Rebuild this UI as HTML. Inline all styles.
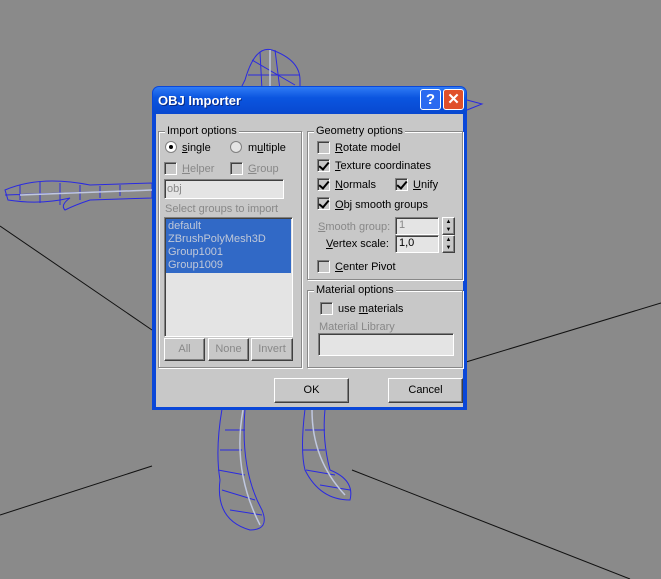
<!DOCTYPE html>
<html><head><meta charset="utf-8"><style>
*{margin:0;padding:0;box-sizing:border-box}
body{width:661px;height:579px;background:#8a8a8a;position:relative;overflow:hidden;font-family:Tahoma,"Liberation Sans",sans-serif;font-size:11px;color:#000}
.a{position:absolute}
.t{position:absolute;white-space:nowrap;line-height:13px}
.g{color:#888}
.gb{position:absolute;border:1px solid #888;box-shadow:1px 1px 0 #fff,inset 1px 1px 0 #fff}
.gl{position:absolute;background:#c8c8c8;padding:0 2px;line-height:12px;top:-7px;left:6px}
.cb{position:absolute;width:13px;height:13px;background:#c8c8c8;border:1px solid;border-color:#808080 #fff #fff #808080;box-shadow:inset 1px 1px 0 #404040}
.cb.k::after{content:"";position:absolute;left:3px;top:0px;width:4px;height:8px;border:solid #000;border-width:0 2px 2px 0;transform:rotate(40deg)}
.fld{position:absolute;background:#e4e4e4;border:1px solid;border-color:#808080 #fff #fff #808080;box-shadow:inset 1px 1px 0 #404040}
.btn{position:absolute;background:#c8c8c8;border:1px solid;border-color:#fff #404040 #404040 #fff;box-shadow:inset -1px -1px 0 #808080;text-align:center;line-height:20px}
u{text-decoration:underline}
</style></head><body>
<svg class="a" style="left:0;top:0" width="661" height="579">
<g stroke="#111" stroke-width="1" fill="none">
<line x1="0" y1="226" x2="152" y2="330"/>
<line x1="0" y1="515" x2="152" y2="466"/>
<line x1="466" y1="362" x2="661" y2="303"/>
<line x1="352" y1="470" x2="630" y2="579"/>
</g>
<g stroke="#2a2ae0" stroke-width="1" fill="none">
<path d="M245,80 Q255,45 272,50 Q300,60 300,80 L300,90 L240,90 Z"/>
<path d="M252,60 L295,85 M260,52 L262,90 M275,50 L280,90 M248,75 L300,75"/>
<path d="M5,190 Q40,175 90,185 L152,183 L152,198 L90,200 Q75,205 65,210 Q60,205 70,198 Q40,205 8,200 Z"/>
<path d="M20,185 L20,200 M40,182 L40,203 M60,183 L60,205 M80,185 L80,200 M100,186 L100,198 M120,185 L120,196 M5,195 L152,190"/>
<path d="M467,100 L482,104 L467,110"/>
<path d="M222,409 Q215,450 220,480 Q215,520 250,530 Q270,530 262,510 Q240,470 245,409 Z"/>
<path d="M225,430 L245,430 M220,450 L242,450 M218,470 L245,475 M222,490 L255,500 M230,510 L262,515"/>
<path d="M305,409 Q300,450 305,470 Q320,500 350,500 Q355,480 330,470 Q322,440 325,409 Z"/>
<path d="M305,430 L325,430 M303,450 L325,450 M306,470 L335,475 M320,485 L350,490"/>
</g>
<g stroke="#c0c8e0" stroke-width="1.5" fill="none">
<path d="M270,50 L270,90 M243,410 Q232,470 260,525 M312,410 Q312,460 345,495 M20,195 L152,190"/>
</g>
</svg>

<div class="a" style="left:152px;top:86px;width:315px;height:324px;background:#0a47d8;border-radius:7px 7px 0 0"></div>
<div class="a" style="left:153px;top:87px;width:313px;height:27px;background:linear-gradient(#2f7bf5,#0b55e0 40%,#0848d0);border-radius:6px 6px 0 0"></div>
<div class="t" style="left:158px;top:94px;color:#fff;font-weight:bold;font-size:13px;text-shadow:1px 1px 0 #0a2a80">OBJ Importer</div>
<div class="a" style="left:420px;top:89px;width:21px;height:21px;background:#2a6af0;border:1px solid #fff;border-radius:3px;color:#fff;font-weight:bold;font-size:15px;text-align:center;line-height:19px">?</div>
<div class="a" style="left:443px;top:89px;width:21px;height:21px;background:#e0502a;border:1px solid #fff;border-radius:3px;color:#fff;font-weight:bold;font-size:15px;text-align:center;line-height:19px">✕</div>
<div class="a" style="left:156px;top:114px;width:307px;height:293px;background:#c8c8c8"></div>

<div class="gb" style="left:158px;top:131px;width:144px;height:237px"><div class="gl">Import options</div></div>
<div class="a" style="left:165px;top:141px;width:12px;height:12px;border-radius:50%;background:#fff;border:1px solid #808080"><div class="a" style="left:3px;top:3px;width:4px;height:4px;border-radius:50%;background:#000"></div></div>
<div class="t" style="left:182px;top:142px"><u>s</u>ingle</div>
<div class="a" style="left:230px;top:141px;width:12px;height:12px;border-radius:50%;background:#e4e4e4;border:1px solid #808080"></div>
<div class="t" style="left:248px;top:142px">m<u>u</u>ltiple</div>
<div class="cb" style="left:164px;top:162px"></div><div class="t g" style="left:182px;top:163px"><u>H</u>elper</div>
<div class="cb" style="left:230px;top:162px"></div><div class="t g" style="left:248px;top:163px"><u>G</u>roup</div>
<div class="fld" style="left:164px;top:179px;width:120px;height:20px"><div class="t g" style="left:2px;top:3px">obj</div></div>
<div class="t g" style="left:165px;top:203px">Select groups to import</div>
<div class="fld" style="left:164px;top:217px;width:129px;height:120px;background:#e4e4e4"></div>
<div class="a" style="left:166px;top:219px;width:125px;height:54px;background:#3169c6"></div>
<div class="t" style="left:168px;top:220px;color:#c0c8d8">default<br>ZBrushPolyMesh3D<br>Group1001<br>Group1009</div>
<div class="btn g" style="left:164px;top:338px;width:41px;height:23px">All</div>
<div class="btn g" style="left:208px;top:338px;width:41px;height:23px">None</div>
<div class="btn g" style="left:251px;top:338px;width:42px;height:23px">Invert</div>

<div class="gb" style="left:307px;top:131px;width:156px;height:149px"><div class="gl">Geometry options</div></div>
<div class="cb" style="left:317px;top:141px"></div><div class="t" style="left:335px;top:142px"><u>R</u>otate model</div>
<div class="cb k" style="left:317px;top:159px"></div><div class="t" style="left:335px;top:160px"><u>T</u>exture coordinates</div>
<div class="cb k" style="left:317px;top:178px"></div><div class="t" style="left:335px;top:179px"><u>N</u>ormals</div>
<div class="cb k" style="left:395px;top:178px"></div><div class="t" style="left:413px;top:179px"><u>U</u>nify</div>
<div class="cb k" style="left:317px;top:197px"></div><div class="t" style="left:335px;top:199px"><u>O</u>bj smooth groups</div>
<div class="t g" style="left:318px;top:221px"><u>S</u>mooth group:</div>
<div class="fld" style="left:395px;top:217px;width:44px;height:18px"><div class="t g" style="left:3px;top:1px">1</div></div>
<div class="btn" style="left:442px;top:217px;width:13px;height:18px;font-size:6px;line-height:8px">▲<br>▼</div>
<div class="t" style="left:326px;top:238px"><u>V</u>ertex scale:</div>
<div class="fld" style="left:395px;top:235px;width:44px;height:18px"><div class="t" style="left:3px;top:1px">1,0</div></div>
<div class="btn" style="left:442px;top:235px;width:13px;height:18px;font-size:6px;line-height:8px">▲<br>▼</div>
<div class="cb" style="left:317px;top:260px"></div><div class="t" style="left:335px;top:261px"><u>C</u>enter Pivot</div>

<div class="gb" style="left:307px;top:290px;width:156px;height:78px"><div class="gl">Material options</div></div>
<div class="cb" style="left:320px;top:302px"></div><div class="t" style="left:338px;top:303px">use <u>m</u>aterials</div>
<div class="t g" style="left:319px;top:321px">Material Library</div>
<div class="fld" style="left:318px;top:333px;width:136px;height:23px"></div>

<div class="btn" style="left:274px;top:378px;width:75px;height:25px;line-height:22px">OK</div>
<div class="btn" style="left:388px;top:378px;width:75px;height:25px;line-height:22px">Cancel</div>
</body></html>
